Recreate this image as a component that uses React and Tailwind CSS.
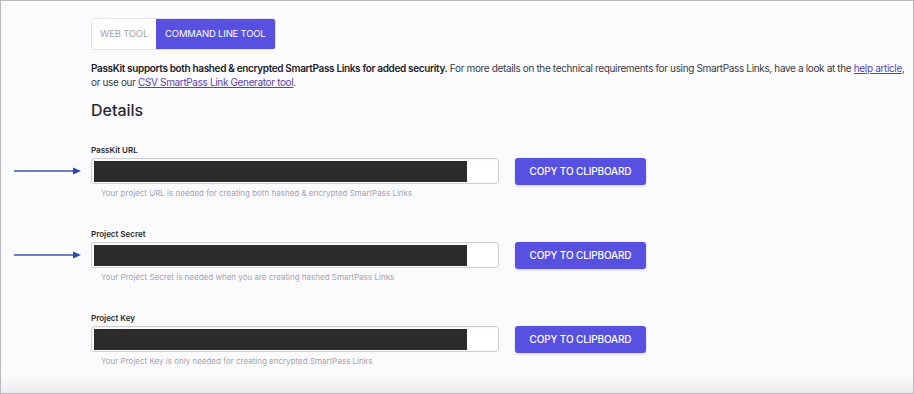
const fields = [
  {
    label: 'PassKit URL',
    hint: 'Your project URL is needed for creating both hashed & encrypted SmartPass Links',
    arrow: true,
  },
  {
    label: 'Project Secret',
    hint: 'Your Project Secret is needed when you are creating hashed SmartPass Links',
    arrow: true,
  },
  {
    label: 'Project Key',
    hint: 'Your Project Key is only needed for creating encrypted SmartPass Links',
    arrow: false,
  },
];

function Arrow() {
  return (
    <svg
      className="absolute left-[-78px] top-[8px]"
      width="68"
      height="8"
      viewBox="0 0 68 8"
      aria-hidden
    >
      <line x1="0" y1="4" x2="60" y2="4" stroke="#3d55b3" strokeWidth="1.5" />
      <polygon points="59,0.5 67,4 59,7.5" fill="#2f49b0" />
    </svg>
  );
}

function Field({ label, hint, arrow }) {
  return (
    <div className="h-[84px]">
      <div className="text-[8px] leading-[10px] font-semibold text-[#2a2a2e]">{label}</div>
      <div className="mt-[3px] flex items-start">
        <div className="relative w-[408px] h-[26px] rounded-[3px] border border-[#cfcfd4] bg-white shadow-[inset_0_1px_1px_rgba(0,0,0,0.04)]">
          {arrow && <Arrow />}
          <div className="absolute left-[2px] top-[2px] w-[373px] h-[21px] bg-[#2b2b2b]" />
        </div>
        <button
          type="button"
          className="ml-[16px] w-[131px] h-[27px] rounded-[3px] bg-[#5750e1] text-white text-[10px] font-medium tracking-[-0.15px] shadow-[0_1px_3px_rgba(0,0,0,0.18)]"
        >
          COPY TO CLIPBOARD
        </button>
      </div>
      <div className="mt-[3px] pl-[10px] text-[8px] leading-[10px] text-[#a3a3ab]">{hint}</div>
    </div>
  );
}

export default function App() {
  return (
    <div
      className="relative w-[914px] h-[394px] overflow-hidden border border-[#b9b9bd] bg-[#fbfbfe] text-[#2e2e33]"
      style={{ fontFamily: 'Inter, "Noto Sans", sans-serif' }}
    >
      <div className="pl-[90px] pt-[17px]">
        <div className="flex w-fit rounded-[3px] overflow-hidden border border-[#e3e3e8] h-[32px]">
          <div className="flex items-center px-[8px] bg-white text-[9.5px] tracking-[-0.2px] text-[#a2a2a8]">
            WEB TOOL
          </div>
          <div className="flex items-center px-[9px] bg-[#5750e1] text-[9.5px] tracking-[-0.2px] text-white">
            COMMAND LINE TOOL
          </div>
        </div>

        <p className="mt-[11px] w-[815px] text-[10px] leading-[14px] tracking-[-0.35px] text-[#3a3a40]">
          <span className="font-semibold text-[#222226]">
            PassKit supports both hashed &amp; encrypted SmartPass Links for added security.
          </span>{' '}
          For more details on the technical requirements for using SmartPass Links, have a look at the{' '}
          <a href="#" className="underline text-[#5b3fb4]">help article</a>, or use our{' '}
          <a href="#" className="underline text-[#5b3fb4]">CSV SmartPass Link Generator tool</a>.
        </p>

        <h2 className="mt-[9px] text-[16px] leading-[24px] font-medium text-[#2a2a2e]">Details</h2>

        <div className="mt-[23px]">
          {fields.map((f) => (
            <Field key={f.label} {...f} />
          ))}
        </div>
      </div>

      <div className="absolute left-0 right-0 bottom-0 h-[18px] bg-gradient-to-b from-transparent to-[#ececf0]" />
    </div>
  );
}
